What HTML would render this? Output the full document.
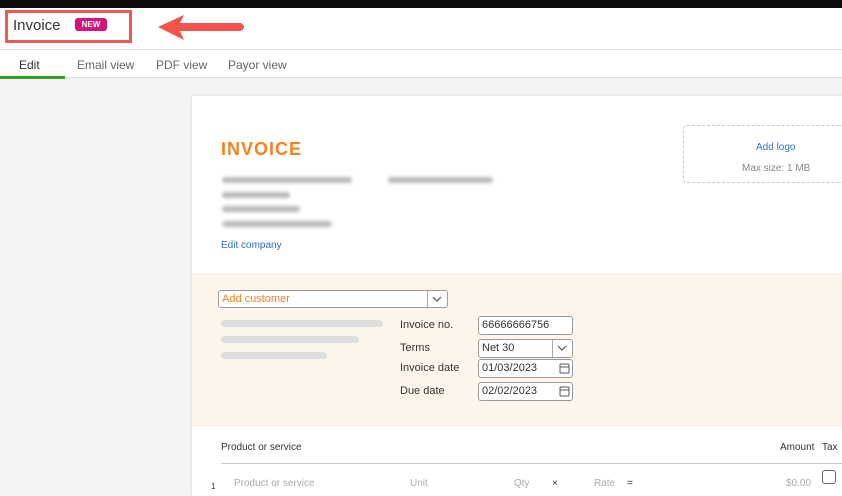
<!DOCTYPE html>
<html><head><meta charset="utf-8"><style>
*{box-sizing:border-box;margin:0;padding:0}
body{width:842px;height:489px;overflow:hidden;background:#f3f4f6;font-family:"Liberation Sans",sans-serif;position:relative}
.abs{position:absolute}
.blur{position:absolute;background:#8a8a8a;filter:blur(1.8px);height:6px;border-radius:3px;opacity:.6}
.inp{position:absolute;border:1px solid #9a9a9a;border-radius:3px;background:#fff;font-size:11px;color:#333;padding-left:3px;height:19px;line-height:17px}
.lbl{position:absolute;font-size:11px;color:#333}
</style></head><body>
<div class="abs" style="left:0;top:0;width:842px;height:8px;background:#0d0d0d"></div>
<div class="abs" style="left:0;top:8px;width:842px;height:42px;background:#fff;border-bottom:1px solid #e3e3e3"></div>
<div class="abs" style="left:5px;top:10px;width:127px;height:33px;border:3px solid #ee5a52"></div>
<div class="abs" style="left:13px;top:17px;font-size:15px;color:#333">Invoice</div>
<div class="abs" style="left:75px;top:18px;width:32px;height:13px;background:#d1157a;border-radius:3px;color:#fff;font-size:8px;font-weight:bold;text-align:center;line-height:13px">NEW</div>
<svg class="abs" style="left:155px;top:12px" width="95" height="32"><path d="M3 15 L29 3 L25 11 L86 11 Q92 15 86 19 L25 19 L29 28 Z" fill="#f0544d"/></svg>
<div class="abs" style="left:0;top:50px;width:842px;height:28px;background:#fff;border-bottom:1px solid #ddd"></div>
<div class="abs" style="left:19px;top:58px;font-size:12px;color:#333">Edit</div>
<div class="abs" style="left:0;top:76px;width:65px;height:3px;background:#2ca01c"></div>
<div class="abs" style="left:77px;top:58px;font-size:12px;color:#666">Email view</div>
<div class="abs" style="left:156px;top:58px;font-size:12px;color:#666">PDF view</div>
<div class="abs" style="left:228px;top:58px;font-size:12px;color:#666">Payor view</div>
<div class="abs" style="left:192px;top:96px;width:660px;height:400px;background:#fff;box-shadow:0 0 3px rgba(0,0,0,.15)"></div>
<div class="abs" style="left:221px;top:139px;font-size:18px;font-weight:bold;color:#f5821f;letter-spacing:1px">INVOICE</div>
<div class="blur" style="left:222px;top:177px;width:130px"></div>
<div class="blur" style="left:388px;top:177px;width:105px"></div>
<div class="blur" style="left:222px;top:192px;width:68px"></div>
<div class="blur" style="left:222px;top:206px;width:78px"></div>
<div class="blur" style="left:222px;top:221px;width:110px"></div>
<div class="abs" style="left:221px;top:240px;font-size:10px;color:#2d6fcc">Edit company</div>
<div class="abs" style="left:683px;top:125px;width:170px;height:58px;border:1px dashed #c8c8c8;border-radius:4px"></div>
<div class="abs" style="left:756px;top:142px;font-size:10px;color:#2d6fcc">Add logo</div>
<div class="abs" style="left:742px;top:163px;font-size:10px;color:#888">Max size: 1 MB</div>
<div class="abs" style="left:192px;top:273px;width:660px;height:154px;background:#fdf5eb"></div>
<div class="inp" style="left:218px;top:290px;width:230px;height:18px;color:#f5821f;line-height:16px">Add customer</div>
<div class="abs" style="left:427px;top:291px;width:1px;height:16px;background:#aaa"></div>
<svg class="abs" style="left:432px;top:295px" width="10" height="8"><path d="M1 2 L5 6 L9 2" fill="none" stroke="#555" stroke-width="1.2"/></svg>
<div class="abs" style="left:221px;top:320px;width:162px;height:7px;background:#ddd;border-radius:4px"></div>
<div class="abs" style="left:221px;top:336px;width:138px;height:7px;background:#ddd;border-radius:4px"></div>
<div class="abs" style="left:221px;top:352px;width:106px;height:7px;background:#ddd;border-radius:4px"></div>
<div class="lbl" style="left:400px;top:319px">Invoice no.</div>
<div class="lbl" style="left:400px;top:342px">Terms</div>
<div class="lbl" style="left:400px;top:362px">Invoice date</div>
<div class="lbl" style="left:400px;top:385px">Due date</div>
<div class="inp" style="left:478px;top:316px;width:95px">66666666756</div>
<div class="inp" style="left:478px;top:339px;width:95px">Net 30</div>
<div class="abs" style="left:552px;top:340px;width:1px;height:17px;background:#aaa"></div>
<svg class="abs" style="left:557px;top:344px" width="10" height="8"><path d="M1 2 L5 6 L9 2" fill="none" stroke="#555" stroke-width="1.2"/></svg>
<div class="inp" style="left:478px;top:359px;width:95px">01/03/2023</div>
<div class="inp" style="left:478px;top:382px;width:95px">02/02/2023</div>
<svg class="abs" style="left:559px;top:362px" width="11" height="12"><rect x="1" y="2" width="9" height="9" rx="1" fill="none" stroke="#555"/><line x1="1" y1="5" x2="10" y2="5" stroke="#555"/></svg>
<svg class="abs" style="left:559px;top:385px" width="11" height="12"><rect x="1" y="2" width="9" height="9" rx="1" fill="none" stroke="#555"/><line x1="1" y1="5" x2="10" y2="5" stroke="#555"/></svg>
<div class="abs" style="left:221px;top:442px;font-size:10px;color:#333">Product or service</div>
<div class="abs" style="left:780px;top:442px;font-size:10px;color:#333">Amount</div>
<div class="abs" style="left:822px;top:442px;font-size:10px;color:#333">Tax</div>
<div class="abs" style="left:221px;top:463px;width:621px;height:1px;background:#ccc"></div>
<div class="abs" style="left:211px;top:482px;font-size:8px;color:#333">1</div>
<div class="abs" style="left:234px;top:478px;font-size:10px;color:#aaa">Product or service</div>
<div class="abs" style="left:410px;top:478px;font-size:10px;color:#aaa">Unit</div>
<div class="abs" style="left:514px;top:478px;font-size:10px;color:#aaa">Qty</div>
<div class="abs" style="left:552px;top:478px;font-size:10px;color:#333">×</div>
<div class="abs" style="left:594px;top:478px;font-size:10px;color:#aaa">Rate</div>
<div class="abs" style="left:627px;top:478px;font-size:10px;color:#333">=</div>
<div class="abs" style="left:786px;top:478px;font-size:10px;color:#aaa">$0.00</div>
<div class="abs" style="left:822px;top:470px;width:14px;height:14px;border:1px solid #666;border-radius:3px;background:#fff"></div>
</body></html>
